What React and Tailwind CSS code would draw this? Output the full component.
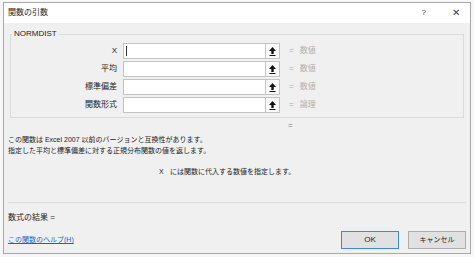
import React from "react";

const FONT = { fontFamily: '"Liberation Sans", "Noto Sans CJK JP", sans-serif' };

function PickIcon() {
  return (
    <svg width="7" height="9" viewBox="0 0 7 9">
      <path d="M3.5 0 L7 4 H4.7 V7 H2.3 V4 H0 Z" fill="#111" />
      <rect x="0.5" y="8" width="6" height="1" fill="#111" />
    </svg>
  );
}

const rows = [
  { label: "X", hint: "数値", cursor: true },
  { label: "平均", hint: "数値" },
  { label: "標準偏差", hint: "数値" },
  { label: "関数形式", hint: "論理" },
];

export default function App() {
  return (
    <div className="w-[474px] h-[257px] bg-[#f7f7f7] pl-[3px] pt-[2px] text-[#222]" style={FONT}>
      <div className="w-[468px] h-[252px] border border-[#a8a8a8] bg-[#f0f0f0] flex flex-col">
        {/* Title bar */}
        <div className="h-[20px] bg-white flex items-center pl-[4px] pr-[10px] shrink-0">
          <span className="text-[8px] leading-[10px]">関数の引数</span>
          <span className="ml-auto text-[8px] leading-[10px] text-[#444]">?</span>
          <span className="ml-[26px] text-[10px] leading-[10px] text-[#444]">✕</span>
        </div>

        <div className="px-[6px]">
          {/* Group box */}
          <fieldset className="mt-[6px] border border-[#dadada] pb-[4px] pt-[4px]">
            <legend className="ml-[1px] px-[2px] text-[8px] leading-[10px]">NORMDIST</legend>
            <div className="flex flex-col gap-[2px]">
              {rows.map((r) => (
                <div key={r.label} className="flex items-center h-[16px]">
                  <div className="w-[106px] text-right text-[8px] leading-[10px]">{r.label}</div>
                  <div className="ml-[6px] flex h-[16px] w-[157px] border border-[#c4c4c4] bg-white">
                    <div className="flex-1 flex items-center pl-[2px]">
                      {r.cursor && <div className="w-px h-[10px] bg-[#333]" />}
                    </div>
                    <div className="w-[14px] h-full border-l border-[#c4c4c4] flex items-center justify-center bg-[#fafafa]">
                      <PickIcon />
                    </div>
                  </div>
                  <span className="ml-[9px] text-[8px] leading-[10px] text-[#aaa]">=</span>
                  <span className="ml-[6px] text-[8px] leading-[10px] text-[#b0b0b0]">{r.hint}</span>
                </div>
              ))}
            </div>
          </fieldset>
        </div>

        {/* Result of function */}
        <div className="mt-[3px] pl-[284px] text-[8px] leading-[10px] text-[#777]">=</div>

        {/* Description */}
        <div className="mt-[3px] pl-[4px] text-[7px] leading-[11px]">
          <div>この関数は Excel 2007 以前のバージョンと互換性があります。</div>
          <div>指定した平均と標準偏差に対する正規分布関数の値を返します。</div>
        </div>
        <div className="mt-[10px] pl-[155px] flex text-[7px] leading-[11px]">
          <span className="w-[11px]">X</span>
          <span>には関数に代入する数値を指定します。</span>
        </div>

        {/* Separator */}
        <div className="mt-[25px] mx-[4px] border-t border-[#dcdcdc]" />

        <div className="mt-[10px] pl-[4px] text-[8px] leading-[10px]">数式の結果 =</div>

        {/* Footer */}
        <div className="mt-[8px] flex items-center pl-[4px] pr-[4px]">
          <a href="#" className="text-[7px] leading-[10px] text-[#1a66c8] underline">
            この関数のヘルプ(H)
          </a>
          <button className="ml-auto w-[58px] h-[18px] border border-[#3c8ad8] bg-[#e1e1e1] text-[8px] leading-[10px]">
            OK
          </button>
          <button className="ml-[9px] w-[58px] h-[18px] border border-[#adadad] bg-[#e1e1e1] text-[7px] leading-[10px]">
            キャンセル
          </button>
        </div>
      </div>
    </div>
  );
}
